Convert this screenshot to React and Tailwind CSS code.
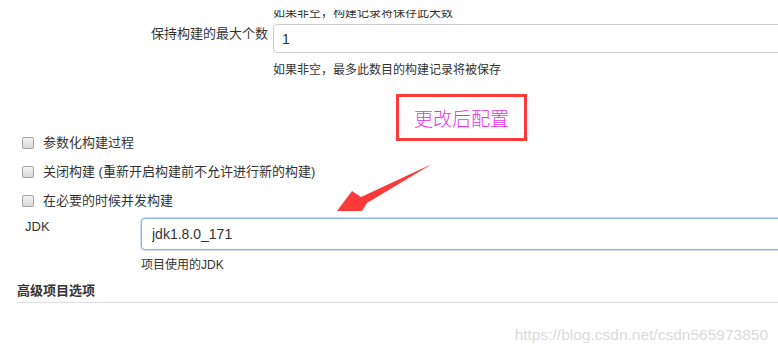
import React from 'react';

const Checkbox = () => (
  <span className="inline-block w-[12px] h-[12px] rounded-[2px] border border-[#a3a3a3] bg-gradient-to-b from-[#f4f4f4] to-[#d9d9d9]" />
);

const CheckRow = ({ label }) => (
  <div className="h-[29px] flex items-center pl-[22px] gap-[9px]">
    <Checkbox />
    <span className="text-[13px] leading-[18px]">{label}</span>
  </div>
);

const App = () => {
  return (
    <div className="relative w-[778px] h-[348px] overflow-hidden bg-white text-[#333] font-['Liberation_Sans','Noto_Sans_CJK_SC',sans-serif]">
      {/* help text of the row above, cut by the top edge */}
      <div className="ml-[273px] mt-[10px] h-[9px] overflow-hidden">
        <div className="-mt-[3px] text-[12px] leading-[12px] whitespace-nowrap">如果非空，构建记录将保存此天数</div>
      </div>

      <div className="mt-[5px] flex">
        <div className="w-[268px] shrink-0 text-right text-[13px] leading-[18px] pt-[1px]">保持构建的最大个数</div>
        <input
          readOnly
          value="1"
          className="ml-[5px] w-[530px] h-[29px] shrink-0 border border-[#cccccc] rounded-[4px] px-[8px] text-[14px] text-[#333] outline-none bg-white"
        />
      </div>
      <div className="ml-[273px] mt-[8px] text-[12px] leading-[18px]">如果非空，最多此数目的构建记录将被保存</div>

      <div className="mt-[49px]">
        <CheckRow label="参数化构建过程" />
        <CheckRow label="关闭构建 (重新开启构建前不允许进行新的构建)" />
        <CheckRow label="在必要的时候并发构建" />
      </div>

      <div className="mt-[3px] flex">
        <div className="w-[141px] shrink-0 pl-[25px] text-[13px] leading-[18px]">JDK</div>
        <input
          readOnly
          value="jdk1.8.0_171"
          className="w-[660px] h-[32px] shrink-0 border border-[#8fb3ee] rounded-l-[4px] px-[10px] text-[14px] text-[#333] outline-none bg-white shadow-[0_0_0_1px_#c9dbf8]"
        />
      </div>
      <div className="ml-[141px] mt-[6px] text-[12px] leading-[18px]">项目使用的JDK</div>

      <div className="ml-[17px] mt-[8px] pb-[2px] border-b-[1.5px] border-[#dddddd] text-[13px] leading-[18px] font-bold">高级项目选项</div>

      <div className="mt-[22px] pr-[10px] text-right text-[15.5px] leading-[19px] text-[#dadada] font-['Liberation_Sans',sans-serif]">
        https://blog.csdn.net/csdn565973850
      </div>

      {/* screenshot annotations */}
      <div className="absolute left-[396px] top-[94px] w-[131px] h-[47px] border-[3px] border-[#fc3a3a] flex items-center justify-center">
        <span className="text-[19px] leading-[20px] text-[#e632e6] font-['Noto_Sans_CJK_SC',sans-serif] font-light">更改后配置</span>
      </div>
      <svg className="absolute left-0 top-0 pointer-events-none" width="778" height="348">
        <polygon points="432,164 367,203 362,211 337,211 352,191 361,197" fill="#fc3a3a" />
      </svg>
    </div>
  );
};

export default App;
